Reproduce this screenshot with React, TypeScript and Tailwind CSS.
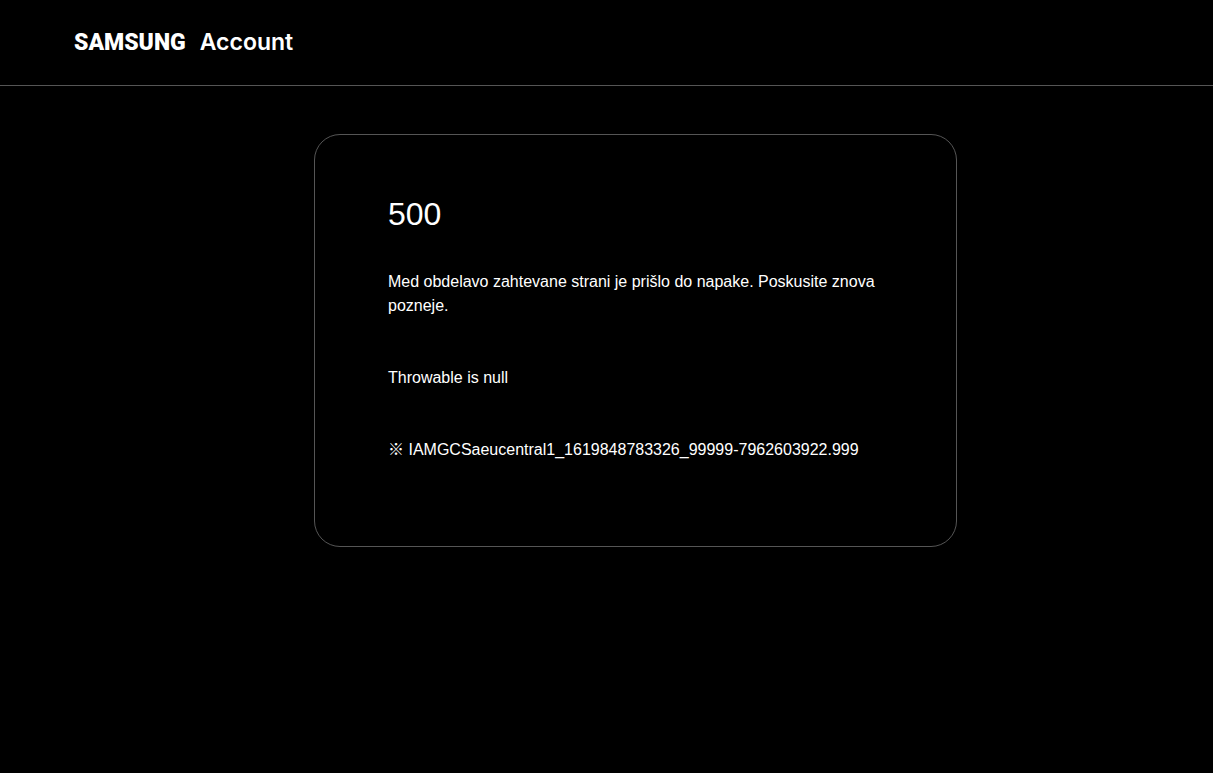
import React from "react";

interface ErrorCardProps {
  code: string;
  message: string;
  detail: string;
  requestId: string;
}

const Header: React.FC = () => {
  return (
    <header className="h-[86px] border-b border-[#555555] pl-[74px] pt-[24px]">
      <a
        href="#"
        className="inline-flex items-baseline gap-[14px] text-[23px] leading-9"
      >
        <span className="font-[Roboto,sans-serif] font-black">SAMSUNG</span>
        <span className="font-['Inter',sans-serif] font-semibold">Account</span>
      </a>
    </header>
  );
};

const ErrorCard: React.FC<ErrorCardProps> = ({
  code,
  message,
  detail,
  requestId,
}) => {
  return (
    <section className="w-full max-w-[643px] rounded-[26px] border border-[#555555] px-[73px] pt-[59px] pb-[84px]">
      <h1 className="text-[32px] leading-10">{code}</h1>
      <div className="mt-9 space-y-12 text-base">
        <p>{message}</p>
        <p>{detail}</p>
        <p>※ {requestId}</p>
      </div>
    </section>
  );
};

export default function App() {
  return (
    <div className="min-h-screen bg-black font-['Liberation_Sans','Noto_Sans_CJK_JP',sans-serif] text-white">
      <Header />
      <main className="flex justify-center pt-12 pl-[58px]">
        <ErrorCard
          code="500"
          message="Med obdelavo zahtevane strani je prišlo do napake. Poskusite znova pozneje."
          detail="Throwable is null"
          requestId="IAMGCSaeucentral1_1619848783326_99999-7962603922.999"
        />
      </main>
    </div>
  );
}
